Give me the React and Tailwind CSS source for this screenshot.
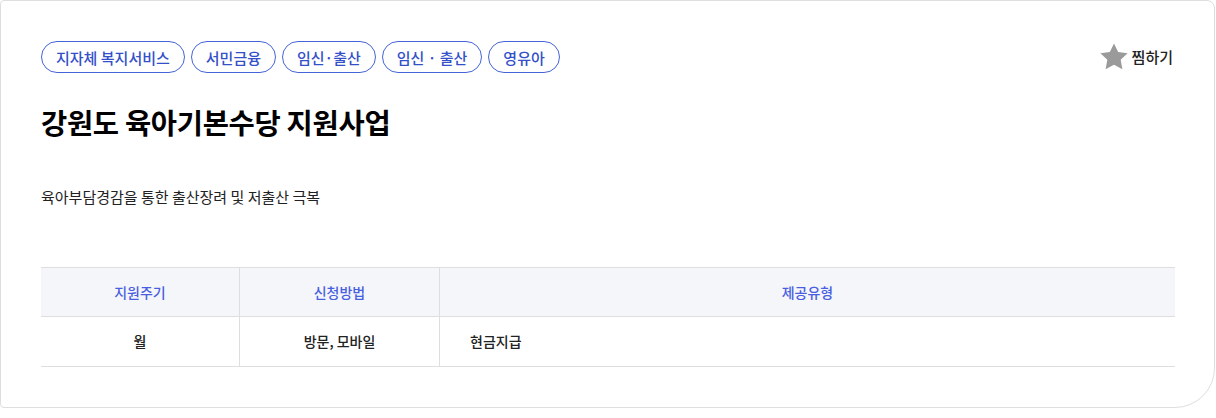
import React from "react";

const tags = ["지자체 복지서비스", "서민금융", "임신·출산", "임신 · 출산", "영유아"];

export default function App() {
  return (
    <div
      className="w-[1216px] h-[418px] bg-white"
      style={{ fontFamily: '"Noto Sans CJK KR", "Noto Sans", sans-serif' }}
    >
      <div className="w-[1215px] h-[408px] border border-[#dedede] rounded-tl-[4px] rounded-tr-[8px] rounded-bl-[4px] rounded-br-[40px] bg-white pt-[40px] pl-[40px] pr-[39px]">
        <div className="flex items-center justify-between h-[32px]">
          <div className="flex gap-[6px]">
            {tags.map((t) => (
              <span
                key={t}
                className="h-[32px] flex items-center px-[14px] border border-[#4564d8] rounded-full text-[15px] font-medium text-[#3350c9] leading-none"
              >
                {t}
              </span>
            ))}
          </div>
          <button className="flex items-center gap-[4px] mr-[2px]">
            <svg width="28" height="28" viewBox="1.5 1.5 21 21">
              <path
                d="M12 1.8l3.1 6.5 7.1.9-5.2 4.9 1.3 7.1L12 17.8l-6.3 3.4 1.3-7.1L1.8 9.2l7.1-.9z"
                fill="#9a9a9a"
              />
            </svg>
            <span className="text-[15px] font-medium text-[#222]">찜하기</span>
          </button>
        </div>
        <h1 className="mt-[29px] text-[28.5px] font-bold leading-[40px] text-black tracking-[-0.3px]">
          강원도 육아기본수당 지원사업
        </h1>
        <p className="mt-[45px] text-[15px] leading-[20px] text-[#222]">
          육아부담경감을 통한 출산장려 및 저출산 극복
        </p>
        <div className="mt-[60px] border-t border-[#dedede]">
          <div className="grid grid-cols-[199px_200px_1fr] bg-[#f5f6fa] border-b border-[#dedede] h-[49px] text-[14px] font-medium text-[#4a5fe0]">
            <div className="flex items-center justify-center border-r border-[#dedede]">지원주기</div>
            <div className="flex items-center justify-center border-r border-[#dedede]">신청방법</div>
            <div className="flex items-center justify-center">제공유형</div>
          </div>
          <div className="grid grid-cols-[199px_200px_1fr] border-b border-[#dedede] h-[50px] text-[14px] font-medium text-[#222]">
            <div className="flex items-center justify-center border-r border-[#dedede]">월</div>
            <div className="flex items-center justify-center border-r border-[#dedede]">방문, 모바일</div>
            <div className="flex items-center pl-[30px]">현금지급</div>
          </div>
        </div>
      </div>
    </div>
  );
}
